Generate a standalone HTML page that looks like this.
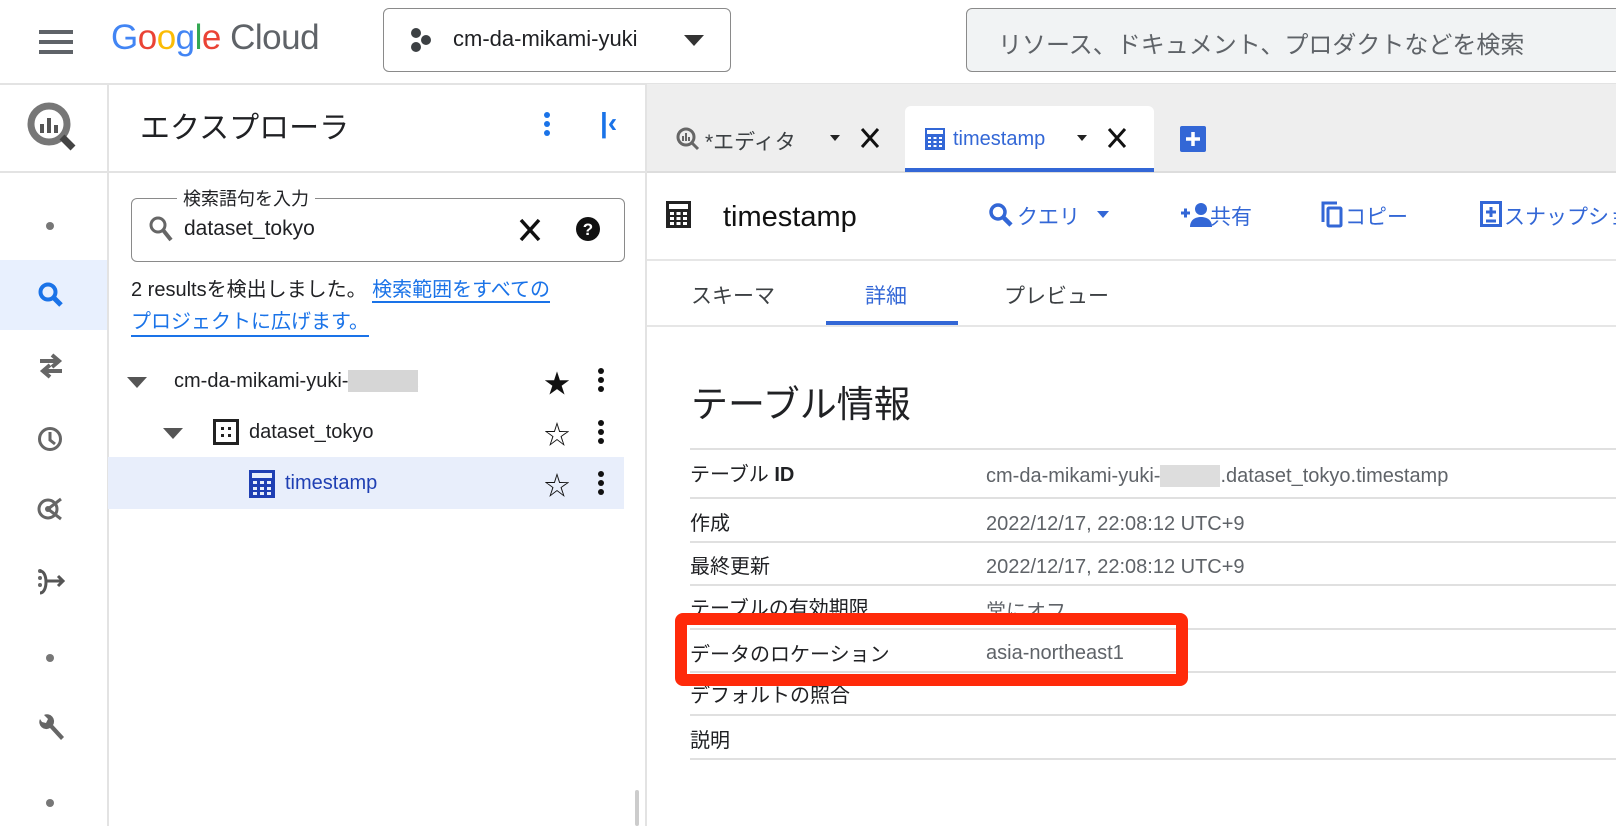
<!DOCTYPE html>
<html><head><meta charset="utf-8"><style>
*{box-sizing:border-box;margin:0;padding:0}
body{width:1616px;height:826px;overflow:hidden;background:#fff;position:relative;font-family:"Liberation Sans","Noto Sans CJK JP",sans-serif;color:#202124}
.a{position:absolute;white-space:nowrap}
.hl{position:absolute;height:2px;background:#e3e3e3}
.vl{position:absolute;width:2px;background:#e3e3e3}
.dot{position:absolute;width:8px;height:8px;border-radius:50%;background:#777}
.tbl{position:absolute;left:690px;right:0;height:2px;background:#e0e0e0}
.lab{position:absolute;left:690px;font-size:20px;color:#202124}
.val{position:absolute;left:986px;font-size:20px;color:#5f6368}
.kebab{position:absolute;width:5px}
.kebab i{display:block;width:6px;height:6px;border-radius:50%;background:#111;margin-bottom:3px}
</style></head><body>
<!-- header -->
<div class="a" style="left:39px;top:30px;width:34px;height:4px;background:#5f6368"></div>
<div class="a" style="left:39px;top:40px;width:34px;height:4px;background:#5f6368"></div>
<div class="a" style="left:39px;top:50px;width:34px;height:4px;background:#5f6368"></div>
<div class="a" style="left:111px;top:18px;font-size:35px;letter-spacing:-0.5px"><span style="color:#4285f4">G</span><span style="color:#ea4335">o</span><span style="color:#fbbc05">o</span><span style="color:#4285f4">g</span><span style="color:#34a853">l</span><span style="color:#ea4335">e</span> <span style="color:#5f6368">Cloud</span></div>
<div class="a" style="left:383px;top:8px;width:348px;height:64px;border:1px solid #8a8a8a;border-radius:6px"></div>
<svg class="a" style="left:410px;top:28px" width="22" height="24" viewBox="0 0 22 24"><circle cx="6" cy="5" r="5" fill="#3c4043"/><circle cx="16" cy="12" r="5" fill="#3c4043"/><circle cx="6" cy="19" r="5" fill="#3c4043"/></svg>
<div class="a" style="left:453px;top:26px;font-size:22px;color:#202124">cm-da-mikami-yuki</div>
<div class="a" style="left:684px;top:35px;width:0;height:0;border-left:10px solid transparent;border-right:10px solid transparent;border-top:11px solid #333"></div>
<div class="a" style="left:966px;top:8px;width:660px;height:64px;border:1px solid #8a8a8a;border-radius:6px;background:#f1f3f4"></div>
<div class="a" style="left:998px;top:25px;font-size:24px;color:#5f6368">リソース、ドキュメント、プロダクトなどを検索</div>
<div class="hl" style="left:0;top:83px;width:1616px"></div>
<!-- rail -->
<div class="vl" style="left:107px;top:84px;height:742px"></div>
<div class="hl" style="left:0;top:171px;width:646px"></div>
<svg class="a" style="left:25px;top:100px" width="55" height="55" viewBox="0 0 55 55"><circle cx="24" cy="24" r="18" fill="none" stroke="#777" stroke-width="7"/><rect x="15" y="24" width="4" height="9" fill="#555"/><rect x="22" y="18" width="4" height="15" fill="#555"/><rect x="29" y="25" width="4" height="8" fill="#555"/><line x1="37" y1="37" x2="48" y2="48" stroke="#444" stroke-width="7"/></svg>
<div class="dot" style="left:46px;top:222px"></div>
<div class="a" style="left:0;top:260px;width:107px;height:70px;background:#e8f0fe"></div>
<svg class="a" style="left:37px;top:281px" width="28" height="28" viewBox="0 0 28 28"><circle cx="11" cy="11" r="7.5" fill="none" stroke="#1a73e8" stroke-width="4"/><line x1="16" y1="16" x2="24" y2="24" stroke="#1a73e8" stroke-width="5"/></svg>
<svg class="a" style="left:38px;top:353px" width="26" height="26" viewBox="0 0 26 26"><path d="M2 8h17M14 2l7 6-7 6" fill="none" stroke="#666" stroke-width="4"/><path d="M24 18H7M12 12l-7 6 7 6" fill="none" stroke="#666" stroke-width="4"/></svg>
<svg class="a" style="left:37px;top:426px" width="26" height="26" viewBox="0 0 26 26"><circle cx="13" cy="13" r="10.5" fill="none" stroke="#666" stroke-width="3"/><path d="M13 6v8l5 4" fill="none" stroke="#666" stroke-width="3"/></svg>
<svg class="a" style="left:37px;top:496px" width="28" height="26" viewBox="0 0 28 26"><circle cx="11" cy="13" r="9" fill="none" stroke="#666" stroke-width="3"/><circle cx="11" cy="13" r="3" fill="#666"/><path d="M11 13L24 3M11 13l13 10" stroke="#666" stroke-width="3"/></svg>
<svg class="a" style="left:37px;top:566px" width="28" height="30" viewBox="0 0 28 30"><circle cx="3" cy="5" r="2" fill="#666"/><circle cx="3" cy="12" r="2" fill="#666"/><circle cx="3" cy="19" r="2" fill="#666"/><path d="M3 27c8 0 8-22 0-22M10 15h16M21 10l5 5-5 5" fill="none" stroke="#555" stroke-width="3"/></svg>
<div class="dot" style="left:46px;top:654px"></div>
<svg class="a" style="left:37px;top:713px" width="28" height="30" viewBox="0 0 28 30"><path d="M3 6a7 7 0 0 0 10 9l11 12 3-3-11-12a7 7 0 0 0-9-10l4 4-2 4-4-1z" fill="#666"/></svg>
<div class="dot" style="left:46px;top:799px"></div>
<!-- explorer -->
<div class="a" style="left:140px;top:103px;font-size:30px;color:#202124">エクスプローラ</div>
<div class="kebab" style="left:544px;top:112px"><i style="background:#1a73e8"></i><i style="background:#1a73e8"></i><i style="background:#1a73e8"></i></div>
<div class="a" style="left:600px;top:107px;font-size:28px;color:#1a73e8;font-weight:bold">|‹</div>
<div class="vl" style="left:645px;top:84px;height:742px"></div>
<div class="a" style="left:131px;top:198px;width:494px;height:64px;border:1px solid #8a8a8a;border-radius:6px"></div>
<div class="a" style="left:177px;top:185px;font-size:18px;background:#fff;padding:0 6px;color:#202124">検索語句を入力</div>
<svg class="a" style="left:148px;top:215px" width="26" height="28" viewBox="0 0 26 28"><circle cx="10" cy="10" r="7" fill="none" stroke="#666" stroke-width="3"/><line x1="15" y1="15" x2="23" y2="25" stroke="#666" stroke-width="4"/></svg>
<div class="a" style="left:184px;top:217px;font-size:21px">dataset_tokyo</div>
<svg class="a" style="left:519px;top:218px" width="22" height="24" viewBox="0 0 22 24"><path d="M2 2l18 20M20 2L2 22" stroke="#111" stroke-width="3.5"/></svg>
<svg class="a" style="left:575px;top:216px" width="26" height="26" viewBox="0 0 26 26"><circle cx="13" cy="13" r="12" fill="#111"/><text x="13" y="19" font-size="17" font-weight="bold" fill="#fff" text-anchor="middle" font-family="Liberation Sans">?</text></svg>
<div class="a" style="left:131px;top:273px;font-size:20px">2 resultsを検出しました。 <span style="color:#1a73e8;border-bottom:2px solid #1a73e8">検索範囲をすべての</span></div>
<div class="a" style="left:131px;top:305px;font-size:20px;color:#1a73e8;border-bottom:2px solid #1a73e8;padding-bottom:1px">プロジェクトに広げます。</div>
<!-- tree -->
<div class="a" style="left:127px;top:377px;border-left:10px solid transparent;border-right:10px solid transparent;border-top:11px solid #555"></div>
<div class="a" style="left:174px;top:370px;font-size:20px">cm-da-mikami-yuki-<span style="background:#ccc;color:#ccc;opacity:.8">xxxxxxx</span></div>
<div class="a" style="left:544px;top:364px;font-size:26px;color:#111">★</div>
<div class="kebab" style="left:598px;top:368px"><i></i><i></i><i></i></div>
<div class="a" style="left:163px;top:428px;border-left:10px solid transparent;border-right:10px solid transparent;border-top:11px solid #555"></div>
<svg class="a" style="left:213px;top:419px" width="26" height="26" viewBox="0 0 26 26"><rect x="1.5" y="1.5" width="23" height="23" fill="none" stroke="#222" stroke-width="3"/><rect x="8" y="8" width="3" height="3" fill="#222"/><rect x="15" y="8" width="3" height="3" fill="#222"/><rect x="8" y="15" width="3" height="3" fill="#222"/><rect x="15" y="15" width="3" height="3" fill="#222"/></svg>
<div class="a" style="left:249px;top:421px;font-size:20px">dataset_tokyo</div>
<div class="a" style="left:544px;top:415px;font-size:26px;color:#111">☆</div>
<div class="kebab" style="left:598px;top:420px"><i></i><i></i><i></i></div>
<div class="a" style="left:108px;top:457px;width:516px;height:52px;background:#e8eefb"></div>
<svg class="a" style="left:249px;top:470px" width="26" height="28" viewBox="0 0 26 28"><rect width="26" height="28" fill="#1f3fb3"/><rect x="3" y="3" width="20" height="5" fill="#e8eefb"/><g fill="#e8eefb"><rect x="4" y="11" width="4" height="3"/><rect x="11" y="11" width="4" height="3"/><rect x="18" y="11" width="4" height="3"/><rect x="4" y="17" width="4" height="3"/><rect x="11" y="17" width="4" height="3"/><rect x="18" y="17" width="4" height="3"/><rect x="4" y="22" width="4" height="3"/><rect x="11" y="22" width="4" height="3"/><rect x="18" y="22" width="4" height="3"/></g></svg>
<div class="a" style="left:285px;top:472px;font-size:20px;color:#1f3fb3">timestamp</div>
<div class="a" style="left:544px;top:466px;font-size:26px;color:#111">☆</div>
<div class="kebab" style="left:598px;top:471px"><i></i><i></i><i></i></div>
<div class="a" style="left:635px;top:790px;width:4px;height:36px;background:#ccc;border-radius:2px"></div>
<!-- tabs -->
<div class="a" style="left:647px;top:84px;width:969px;height:88px;background:#eeeeee"></div>
<div class="hl" style="left:647px;top:171px;width:969px;background:#ddd"></div>
<svg class="a" style="left:675px;top:126px" width="26" height="26" viewBox="0 0 26 26"><circle cx="11" cy="11" r="8" fill="none" stroke="#666" stroke-width="3"/><rect x="7" y="10" width="2" height="5" fill="#666"/><rect x="10" y="7" width="2" height="8" fill="#666"/><rect x="13" y="11" width="2" height="4" fill="#666"/><line x1="17" y1="17" x2="23" y2="23" stroke="#666" stroke-width="3"/></svg>
<div class="a" style="left:705px;top:126px;font-size:21px;color:#3c4043">*エディタ</div>
<div class="a" style="left:830px;top:135px;border-left:5px solid transparent;border-right:5px solid transparent;border-top:6px solid #222"></div>
<svg class="a" style="left:861px;top:128px" width="18" height="20" viewBox="0 0 18 20"><path d="M1 1l16 18M17 1L1 19" stroke="#111" stroke-width="3"/></svg>
<div class="a" style="left:905px;top:106px;width:249px;height:66px;background:#fff;border-radius:6px 6px 0 0;border-bottom:4px solid #3367d6"></div>
<svg class="a" style="left:925px;top:128px" width="20" height="22" viewBox="0 0 20 22"><rect width="20" height="22" fill="#3367d6"/><rect x="2" y="2" width="16" height="4" fill="#fff"/><g fill="#fff"><rect x="3" y="9" width="3" height="2"/><rect x="8.5" y="9" width="3" height="2"/><rect x="14" y="9" width="3" height="2"/><rect x="3" y="13" width="3" height="2"/><rect x="8.5" y="13" width="3" height="2"/><rect x="14" y="13" width="3" height="2"/><rect x="3" y="17" width="3" height="2"/><rect x="8.5" y="17" width="3" height="2"/><rect x="14" y="17" width="3" height="2"/></g></svg>
<div class="a" style="left:953px;top:128px;font-size:20px;color:#3367d6">timestamp</div>
<div class="a" style="left:1077px;top:135px;border-left:5px solid transparent;border-right:5px solid transparent;border-top:6px solid #222"></div>
<svg class="a" style="left:1108px;top:128px" width="18" height="20" viewBox="0 0 18 20"><path d="M1 1l16 18M17 1L1 19" stroke="#111" stroke-width="3"/></svg>
<svg class="a" style="left:1180px;top:126px" width="26" height="26" viewBox="0 0 26 26"><rect width="26" height="26" rx="2" fill="#3367d6"/><path d="M13 6v14M6 13h14" stroke="#fff" stroke-width="3.5"/></svg>
<!-- title row -->
<svg class="a" style="left:666px;top:201px" width="25" height="27" viewBox="0 0 25 27"><rect width="25" height="27" fill="#222"/><rect x="3" y="3" width="19" height="5" fill="#fff"/><g fill="#fff"><rect x="4" y="11" width="4" height="3"/><rect x="10.5" y="11" width="4" height="3"/><rect x="17" y="11" width="4" height="3"/><rect x="4" y="16" width="4" height="3"/><rect x="10.5" y="16" width="4" height="3"/><rect x="17" y="16" width="4" height="3"/><rect x="4" y="21" width="4" height="3"/><rect x="10.5" y="21" width="4" height="3"/><rect x="17" y="21" width="4" height="3"/></g></svg>
<div class="a" style="left:723px;top:201px;font-size:29px;color:#111">timestamp</div>
<svg class="a" style="left:988px;top:202px" width="26" height="26" viewBox="0 0 26 26"><circle cx="10" cy="10" r="7" fill="none" stroke="#3367d6" stroke-width="3.5"/><line x1="15" y1="15" x2="23" y2="23" stroke="#3367d6" stroke-width="4.5"/></svg>
<div class="a" style="left:1017px;top:201px;font-size:21px;color:#3367d6">クエリ</div>
<div class="a" style="left:1097px;top:211px;border-left:6px solid transparent;border-right:6px solid transparent;border-top:7px solid #3367d6"></div>
<svg class="a" style="left:1180px;top:202px" width="32" height="26" viewBox="0 0 32 26"><path d="M1 11h9M5.5 6.5v9" stroke="#3367d6" stroke-width="3"/><circle cx="21" cy="7" r="6" fill="#3367d6"/><path d="M10 25c0-7 5-10 11-10s11 3 11 10z" fill="#3367d6"/></svg>
<div class="a" style="left:1210px;top:201px;font-size:21px;color:#3367d6">共有</div>
<svg class="a" style="left:1320px;top:200px" width="24" height="28" viewBox="0 0 24 28"><path d="M3 22V3h14" fill="none" stroke="#3367d6" stroke-width="3"/><rect x="8" y="8" width="13" height="18" rx="1" fill="none" stroke="#3367d6" stroke-width="3"/></svg>
<div class="a" style="left:1345px;top:201px;font-size:21px;color:#3367d6">コピー</div>
<svg class="a" style="left:1480px;top:201px" width="22" height="26" viewBox="0 0 22 26"><rect x="1.5" y="1.5" width="19" height="23" fill="none" stroke="#3367d6" stroke-width="3"/><path d="M11 6v10M6 11h10M6 20h10" stroke="#3367d6" stroke-width="3"/></svg>
<div class="a" style="left:1504px;top:201px;font-size:21px;color:#3367d6">スナップショ</div>
<div class="hl" style="left:647px;top:259px;width:969px;background:#e6e6e6"></div>
<div class="a" style="left:691px;top:280px;font-size:21px;color:#3c4043">スキーマ</div>
<div class="a" style="left:865px;top:280px;font-size:21px;color:#3367d6">詳細</div>
<div class="a" style="left:1004px;top:280px;font-size:21px;color:#3c4043">プレビュー</div>
<div class="a" style="left:826px;top:321px;width:132px;height:4px;background:#3367d6"></div>
<div class="hl" style="left:647px;top:325px;width:969px;background:#e6e6e6"></div>
<!-- details -->
<div class="a" style="left:691px;top:374px;font-size:37px;color:#202124">テーブル情報</div>
<div class="tbl" style="top:448px"></div>
<div class="lab" style="top:458px">テーブル <b>ID</b></div>
<div class="val" style="top:465px">cm-da-mikami-yuki-<span style="background:#ddd;color:#ddd">xxxxxx</span>.dataset_tokyo.timestamp</div>
<div class="tbl" style="top:497px"></div>
<div class="lab" style="top:507px">作成</div>
<div class="val" style="top:513px">2022/12/17, 22:08:12 UTC+9</div>
<div class="tbl" style="top:541px"></div>
<div class="lab" style="top:550px">最終更新</div>
<div class="val" style="top:556px">2022/12/17, 22:08:12 UTC+9</div>
<div class="tbl" style="top:584px"></div>
<div class="lab" style="top:592px">テーブルの有効期限</div>
<div class="val" style="top:595px">常にオフ</div>
<div class="tbl" style="top:628px"></div>
<div class="lab" style="top:638px">データのロケーション</div>
<div class="val" style="top:642px">asia-northeast1</div>
<div class="tbl" style="top:671px"></div>
<div class="lab" style="top:679px">デフォルトの照合</div>
<div class="tbl" style="top:714px"></div>
<div class="lab" style="top:724px">説明</div>
<div class="tbl" style="top:758px"></div>
<div class="a" style="left:675px;top:613px;width:513px;height:73px;border:12px solid #ff2a0a;border-radius:8px"></div>
</body></html>
